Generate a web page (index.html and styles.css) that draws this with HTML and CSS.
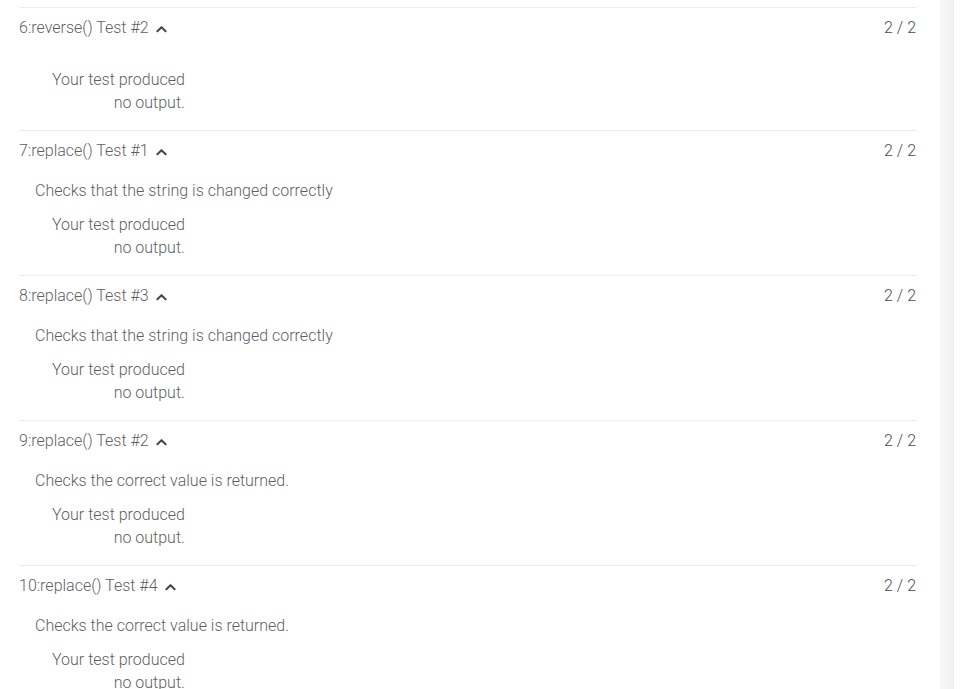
FILE: index.html
```html
<!DOCTYPE html>
<html lang="en">
<head>
  <meta charset="UTF-8" />
  <title>Test results</title>
  <link rel="stylesheet" href="styles.css">
</head>
<body>
  <div class="page">
    <div class="results">

      <div class="case">
        <div class="case-head">
          <span class="case-name">6:reverse() Test #2
            <svg class="caret" viewBox="0 0 12 8" width="11" height="8"><path d="M1.5 6.5 L6 2 L10.5 6.5" /></svg>
          </span>
          <span class="score">2 / 2</span>
        </div>
        <div class="output first">Your test produced<br>no output.</div>
      </div>

      <div class="case">
        <div class="case-head">
          <span class="case-name">7:replace() Test #1
            <svg class="caret" viewBox="0 0 12 8" width="11" height="8"><path d="M1.5 6.5 L6 2 L10.5 6.5" /></svg>
          </span>
          <span class="score">2 / 2</span>
        </div>
        <p class="desc">Checks that the string is changed correctly</p>
        <div class="output">Your test produced<br>no output.</div>
      </div>

      <div class="case">
        <div class="case-head">
          <span class="case-name">8:replace() Test #3
            <svg class="caret" viewBox="0 0 12 8" width="11" height="8"><path d="M1.5 6.5 L6 2 L10.5 6.5" /></svg>
          </span>
          <span class="score">2 / 2</span>
        </div>
        <p class="desc">Checks that the string is changed correctly</p>
        <div class="output">Your test produced<br>no output.</div>
      </div>

      <div class="case">
        <div class="case-head">
          <span class="case-name">9:replace() Test #2
            <svg class="caret" viewBox="0 0 12 8" width="11" height="8"><path d="M1.5 6.5 L6 2 L10.5 6.5" /></svg>
          </span>
          <span class="score">2 / 2</span>
        </div>
        <p class="desc">Checks the correct value is returned.</p>
        <div class="output">Your test produced<br>no output.</div>
      </div>

      <div class="case">
        <div class="case-head">
          <span class="case-name">10:replace() Test #4
            <svg class="caret" viewBox="0 0 12 8" width="11" height="8"><path d="M1.5 6.5 L6 2 L10.5 6.5" /></svg>
          </span>
          <span class="score">2 / 2</span>
        </div>
        <p class="desc">Checks the correct value is returned.</p>
        <div class="output">Your test produced<br>no output.</div>
      </div>

    </div>
    <div class="gutter"></div>
  </div>
</body>
</html>
```

FILE: styles.css
```css
body {
  margin: 0;
  font-family: Roboto, "Open Sans", sans-serif;
  font-weight: 300;
  font-size: 16px;
  color: #5f5f5f;
  background: #fff;
  overflow: hidden;
}

.page {
  display: flex;
  height: 689px;
}

.results {
  width: 898px;
  padding: 7px 23px 0 19px;
}

.gutter {
  width: 13px;
  background: linear-gradient(to right, #f7f7f7, #f2f2f2);
  border-right: 1px solid #e9e9e9;
}

.case {
  border-top: 1px solid #ececec;
  padding: 9px 0 16px;
}

.case-head {
  display: flex;
  justify-content: space-between;
  align-items: center;
  line-height: 22px;
}

.case-name {
  display: flex;
  align-items: center;
  gap: 7px;
}

.caret {
  fill: none;
  stroke: #3e4a52;
  stroke-width: 2.2;
  stroke-linecap: round;
  stroke-linejoin: round;
  margin-top: 1px;
}

.score {
  color: #3f4d57;
  padding-right: 1px;
}

.desc {
  margin: 18px 0 0 16px;
  line-height: 22px;
}

.output {
  display: inline-block;
  margin: 11px 0 0 33px;
  text-align: right;
  line-height: 23px;
}

.output.first {
  margin-top: 29px;
}
```
